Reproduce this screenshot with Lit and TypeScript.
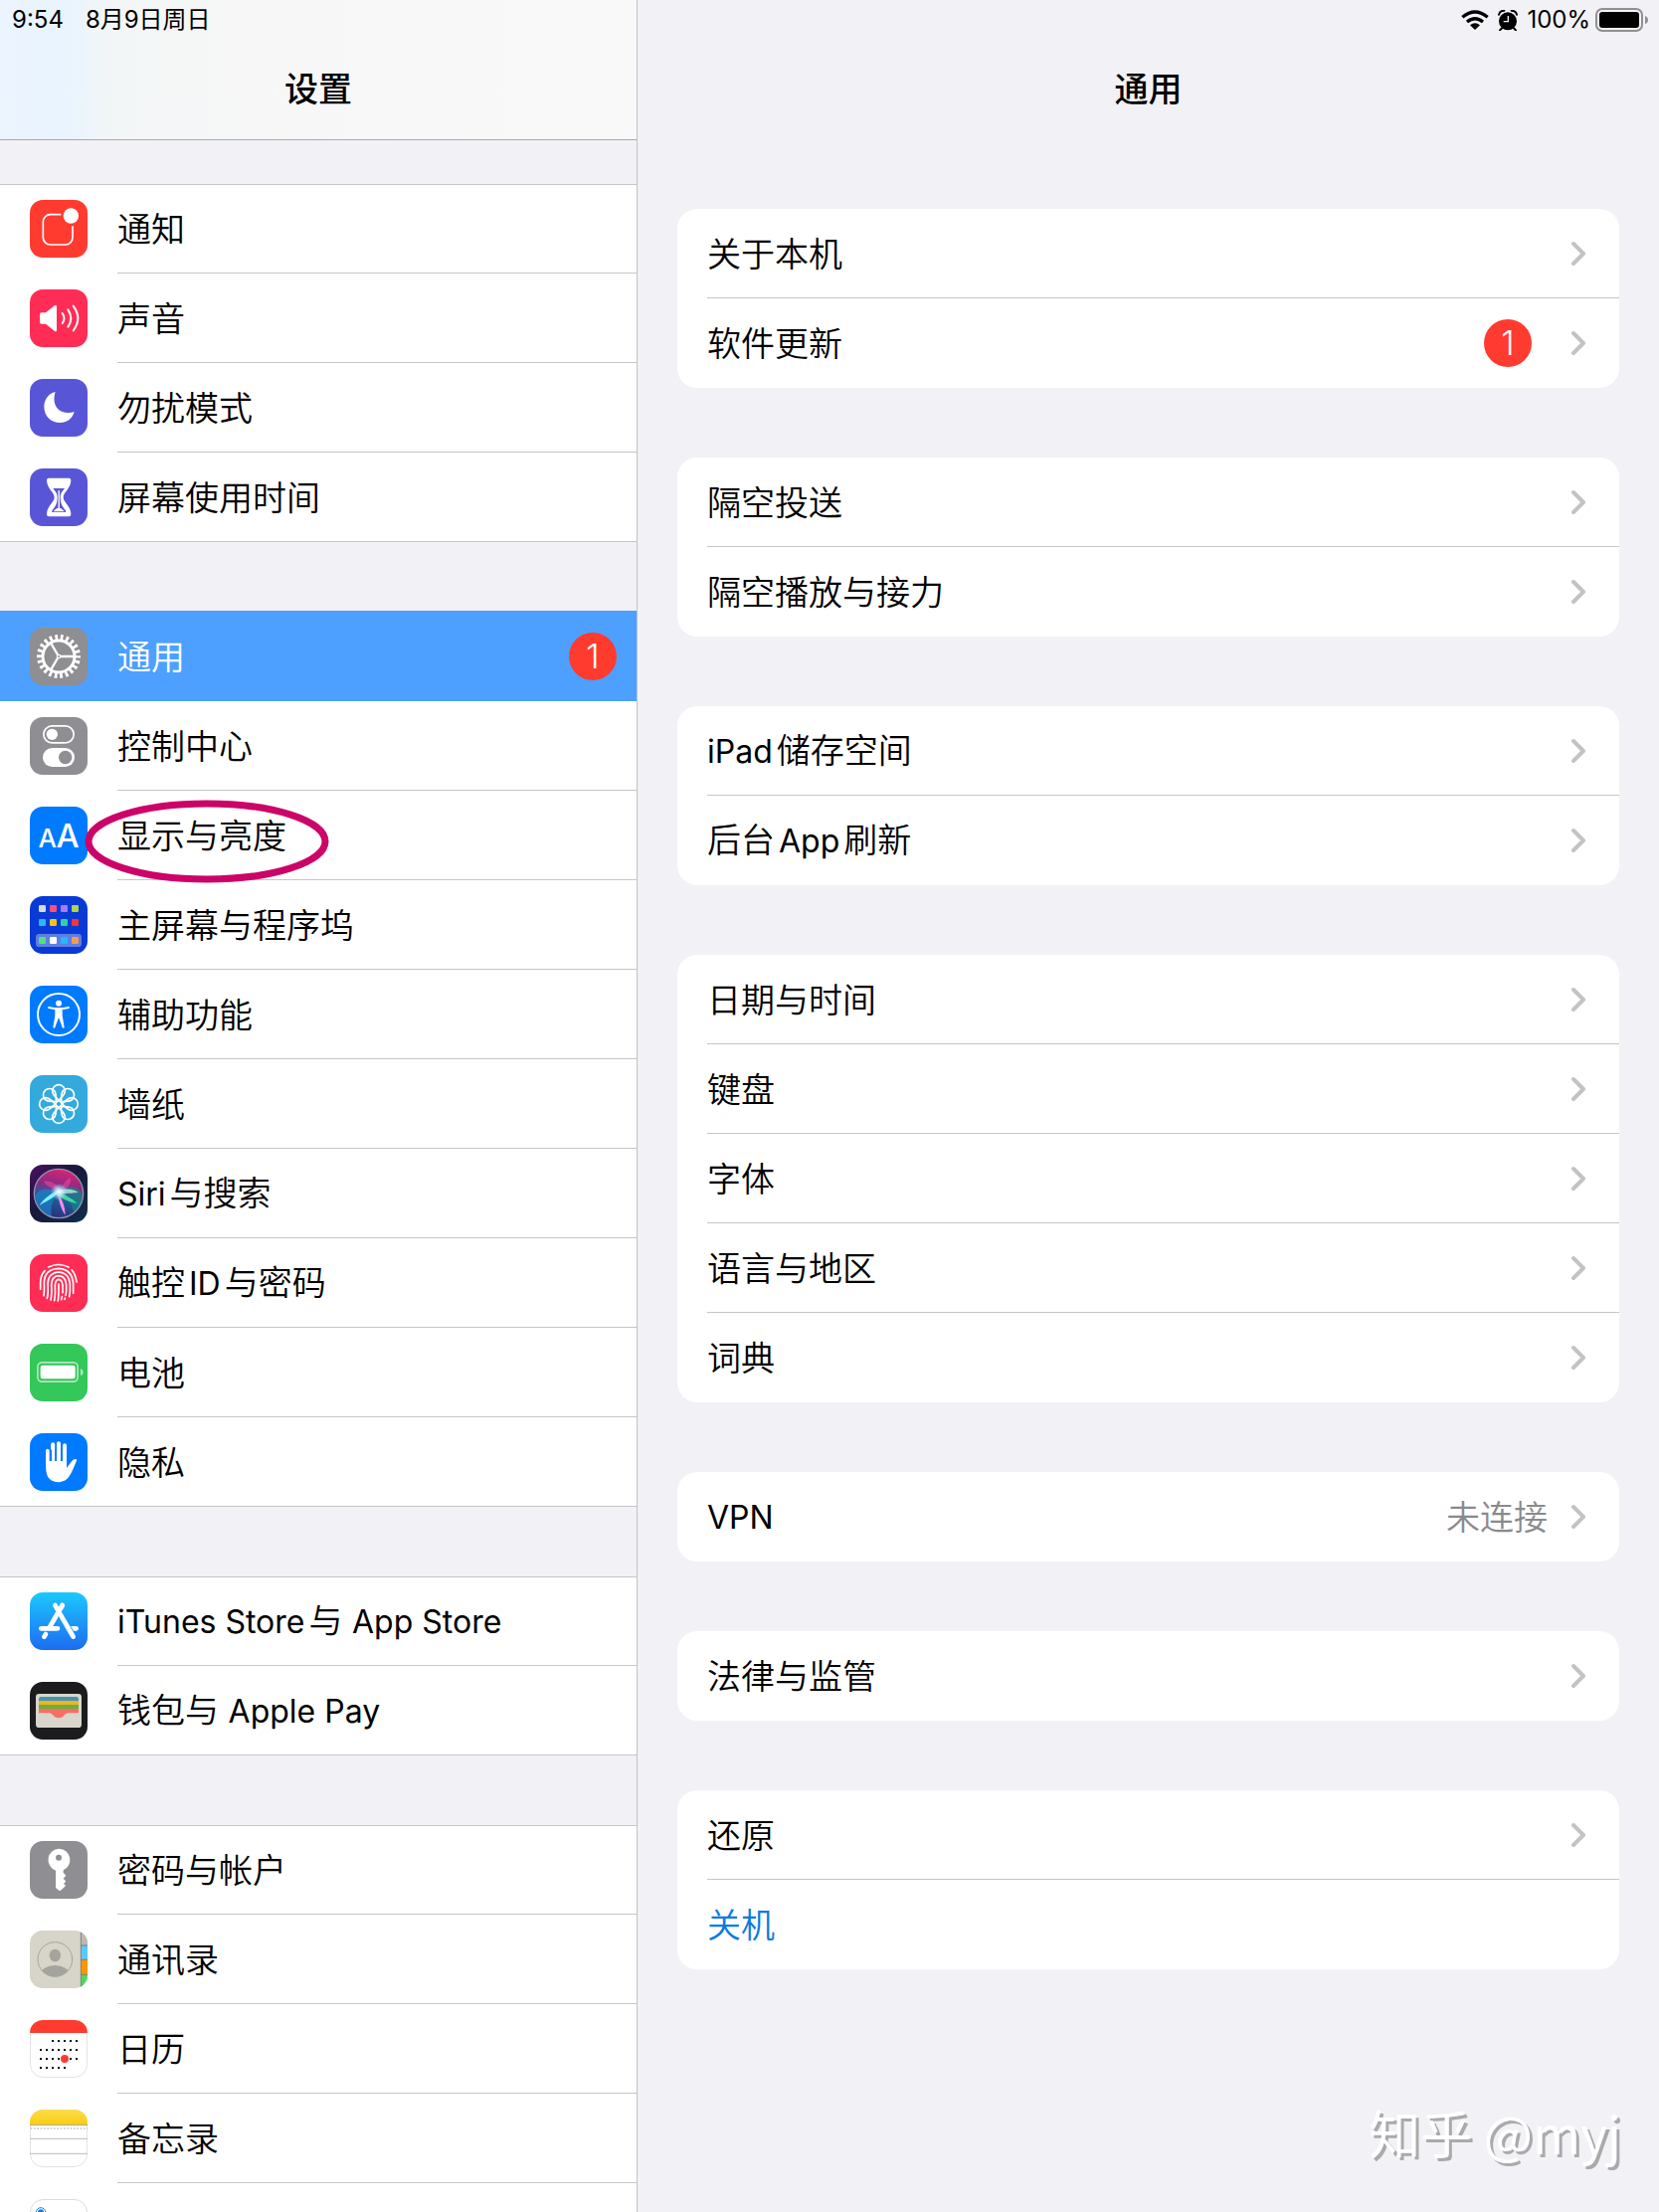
import { LitElement, html, css, svg, nothing } from "lit";
import type { SVGTemplateResult } from "lit";
import { customElement, property } from "lit/decorators.js";
import { classMap } from "lit/directives/class-map.js";

/* Every tile is drawn on a 174-unit square. */
const solid = (fill: string) => svg`<rect width="174" height="174" rx="39" fill=${fill} />`;

const petals = [0, 45, 90, 135, 180, 225, 270, 315];
const homeTiles = [
  ["#d5dbe0", "#fb5078", "#a57bf7", "#b1d34d"],
  ["#26b8f0", "#f8c01c", "#2fd0a8", "#f5352f"],
  ["#53e07a", "#ffffff", "#21baff", "#f59b50"],
];
const homeRows = [27, 69, 123];
const calendarRows = [
  [2, 6],
  [0, 6],
  [0, 6],
  [0, 4],
];

const icons: Record<string, SVGTemplateResult> = {
  notifications: svg`${solid("#ff3b30")}
    <path d="M94 44H62a22 22 0 0 0-22 22v47a22 22 0 0 0 22 22h45a22 22 0 0 0 22-22V79" fill="none" stroke="#fff" stroke-width="5" />
    <circle cx="124" cy="48" r="23" fill="#fff" />`,
  sounds: svg`${solid("#ff2d55")}
    <path d="M35 70H48L74 49Q81 44 81 53V122Q81 130 74 125L48 104H35Q30 104 30 99V75Q30 70 35 70Z" fill="#fff" />
    <path d="M98 72Q109 87 98 102M115 61Q133 87 115 113M131 50Q159 87 131 124" fill="none" stroke="#fff" stroke-width="6" stroke-linecap="round" />`,
  dnd: svg`${solid("#5856d6")}
    <path d="M77 39C50 45 43 70 43 84C43 112 64 132 91 132C112 132 128 120 134 99C118 105 97 103 85 91C72 78 71 56 77 39Z" fill="#fff" />`,
  screentime: svg`${solid("#5856d6")}
    <path d="M57 29H118Q124 29 124 36C124 60 101 72 101 87C101 102 124 114 124 138Q124 145 118 145H57Q51 145 51 138C51 114 74 102 74 87C74 72 51 60 51 36Q51 29 57 29Z" fill="#fff" />
    <path d="M70 60H105C101 67 92 72 92 87C92 106 99 117 108 127L108 132H67V127C76 117 83 106 83 87C83 72 74 67 70 60Z" fill="#5856d6" />
    <path d="M85.500 66H89.500V119C96 121 101 125 104 130H71C74 125 79 121 85.500 119Z" fill="#fff" />`,
  general: svg`${solid("#8e8e93")}
    <g fill="none" stroke="#fff">
      <circle cx="87" cy="87" r="58" stroke-width="16" pathLength="44" stroke-dasharray="1 1" stroke-dashoffset="0.5" />
      <circle cx="87" cy="87" r="48" stroke-width="9" />
      <path d="M87 87H134M87 87L63 46M87 87L63 128" stroke-width="7" />
    </g>
    <circle cx="87" cy="87" r="7" fill="#fff" /><circle cx="87" cy="87" r="3" fill="#8e8e93" />`,
  control: svg`${solid("#8e8e93")}
    <rect x="41.500" y="26.500" width="91" height="51" rx="25.500" fill="none" stroke="#fff" stroke-width="5" />
    <circle cx="67" cy="52" r="17" fill="#fff" />
    <rect x="39" y="93" width="96" height="57" rx="28.500" fill="#fff" />
    <circle cx="107" cy="121.500" r="20" fill="#8e8e93" />`,
  display: svg`${solid("#007aff")}
    <g fill="#fff" text-anchor="middle" font-family="Inter, sans-serif" font-weight="450">
      <text x="53" y="123" font-size="78">A</text><text x="114" y="123" font-size="98">A</text>
    </g>`,
  home: svg`${solid("#0a3ad6")}
    <rect x="18" y="114" width="138" height="39" rx="10" fill="#fff" fill-opacity="0.35" />
    ${homeTiles.map((row, r) =>
      row.map((c, i) => svg`<rect x=${27 + i * 33} y=${homeRows[r]} width="21" height="21" rx="4" fill=${c} />`)
    )}`,
  accessibility: svg`${solid("#007aff")}
    <circle cx="87" cy="87" r="63" fill="none" stroke="#fff" stroke-width="6" />
    <circle cx="87" cy="53" r="9" fill="#fff" />
    <path d="M57 66Q72 70 87 70T117 66" fill="none" stroke="#fff" stroke-width="6" stroke-linecap="round" />
    <path d="M76 68H98V90L104 126Q101 130 98 126L88 98H86L76 126Q73 130 70 126L76 90Z" fill="#fff" />`,
  wallpaper: svg`${solid("#34aadc")}
    <g fill="none" stroke="#fff" stroke-width="5">
      ${petals.map(
        (a) => svg`<path transform="rotate(${a} 87 87)" d="M87 77C80 67 68 60 68 48A19 19 0 0 1 106 48C106 60 94 67 87 77Z" />`
      )}
      <circle cx="87" cy="87" r="9" />
    </g>`,
  siri: svg`
    <defs>
      <linearGradient id="siri-bg" x1="0" y1="0" x2="1" y2="1">
        <stop offset="0" stop-color="#4a1062" /><stop offset="0.45" stop-color="#17183a" /><stop offset="1" stop-color="#122f4a" />
      </linearGradient>
      <linearGradient id="siri-orb" x1="0.6" y1="0" x2="0.4" y2="1">
        <stop offset="0" stop-color="#d8246e" /><stop offset="0.35" stop-color="#8a2a86" />
        <stop offset="0.6" stop-color="#1f5f96" /><stop offset="1" stop-color="#2b2f7c" />
      </linearGradient>
      <radialGradient id="siri-glow"><stop offset="0" stop-color="#fff" /><stop offset="0.4" stop-color="#c8f4ff" stop-opacity="0.8" /><stop offset="1" stop-color="#7fd6ff" stop-opacity="0" /></radialGradient>
    </defs>
    <rect width="174" height="174" rx="39" fill="url(#siri-bg)" />
    <circle cx="87" cy="87" r="73" fill="url(#siri-orb)" />
    <path d="M87 82C60 70 30 70 18 90C14 120 40 150 66 156C60 130 70 100 87 82Z" fill="#1a86cf" fill-opacity="0.65" />
    <path d="M90 82C115 60 140 62 157 84C160 110 150 130 132 142C125 112 112 96 90 82Z" fill="#0f8f86" fill-opacity="0.6" />
    <path d="M88 84C70 72 48 64 42 50C60 46 84 56 92 80C100 58 108 46 122 40C128 56 112 76 90 86Z" fill="#f04aa0" fill-opacity="0.55" />
    <path d="M90 78C110 70 134 74 146 84C124 86 106 88 90 86Z" fill="#b9f5ea" fill-opacity="0.75" />
    <path d="M28 123C46 100 66 84 92 76C80 96 56 108 28 123Z" fill="#7ff3ff" />
    <path d="M84 84C100 88 126 100 143 117C120 114 98 104 84 90Z" fill="#3fe0a4" fill-opacity="0.9" />
    <path d="M84 88C96 100 106 124 107 152C98 142 88 116 84 88Z" fill="#f08ce4" />
    <circle cx="88" cy="82" r="26" fill="url(#siri-glow)" />
    <circle cx="87" cy="87" r="74" fill="none" stroke="#b9b6cf" stroke-opacity="0.75" stroke-width="4" />`,
  touchid: svg`${solid("#ff2d55")}
    <g fill="none" stroke="#fff" stroke-width="5" stroke-linecap="round">
      <path d="M56 39Q86 24 117 39" />
      <path d="M32 106V86Q32 64 45 50M126 47Q138 60 141 84" />
      <path d="M42 125Q44 112 43 88Q43 45 87 43Q127 45 131 88V118" />
      <path d="M52 133Q56 118 54 90Q55 56 87 54Q118 56 121 90Q122 112 119 128" />
      <path d="M63 138Q67 120 65 92Q66 66 87 65Q108 66 110 92Q111 112 108 124" />
      <path d="M74 140Q78 120 76 94Q77 77 87 76Q98 77 99 94V116M97 128L95 137" />
      <path d="M87 90V110Q87 126 85 141M106 132L105 136" />
    </g>`,
  battery: svg`${solid("#34c759")}
    <rect x="23.500" y="56.500" width="121" height="58" rx="13" fill="none" stroke="#fff" stroke-opacity="0.6" stroke-width="5" />
    <rect x="32" y="65" width="105" height="41" rx="7" fill="#fff" />
    <path d="M153 75Q161 79 161 86T153 97Z" fill="#fff" fill-opacity="0.6" />`,
  privacy: svg`${solid("#007aff")}
    <g stroke="#fff" stroke-linecap="round">
      <path d="M53.500 53V96" stroke-width="11" /><path d="M69.500 34V96" stroke-width="12" />
      <path d="M87 31V96" stroke-width="12" /><path d="M105 37V96" stroke-width="12" />
    </g>
    <path d="M63 50h3v36h-3zM77 50h4v36h-4zM95 50h3v36h-3z" fill="#007aff" />
    <path d="M48 84H111V105L126 85Q134 76 141 79Q143 81 138 90C131 108 122 129 111 139C98 151 70 150 59 137C50 127 48 116 48 84Z" fill="#fff" />`,
  appstore: svg`
    <defs><linearGradient id="store" x1="0" y1="0" x2="0" y2="1"><stop offset="0" stop-color="#1bc8fc" /><stop offset="1" stop-color="#1d6cf1" /></linearGradient></defs>
    <rect width="174" height="174" rx="39" fill="url(#store)" />
    <g stroke="#fff" stroke-width="14" stroke-linecap="round">
      <path d="M34 109H84M122 109H140" /><path d="M98 39L58 108M48 126L43 134" />
    </g>
    <path d="M76 39L131 134" stroke="#219ef8" stroke-width="19" />
    <path d="M76 39L131 134M98 39L82 67" stroke="#fff" stroke-width="14" stroke-linecap="round" />`,
  wallet: svg`${solid("#1c1c1e")}
    <rect x="18" y="36" width="138" height="102" rx="10" fill="#d9d6cc" />
    <path d="M27 57V52Q27 45 34 45H140Q147 45 147 52V57Z" fill="#4196b4" />
    <path d="M27 57H147V69H27Z" fill="#f1b31c" /><path d="M27 69H147V81H27Z" fill="#67b13c" />
    <path d="M27 81H147V94H117C104 94 103 109 87 109S70 94 57 94H27Z" fill="#f86e64" />`,
  passwords: svg`${solid("#8e8e93")}
    <path d="M88 23A34 34 0 0 1 101 88V95L109 104L101 113L107 119Q110 123 101 129L107 133Q109 135 105 138L92 150Q89 151 86 148L78 141V89A34 34 0 0 1 88 23Z" fill="#fff" />
    <circle cx="87" cy="50" r="9" fill="#8e8e93" />`,
  contacts: svg`
    <defs><clipPath id="tile"><rect width="174" height="174" rx="39" /></clipPath><clipPath id="face"><circle cx="76" cy="87" r="52" /></clipPath></defs>
    <g clip-path="url(#tile)">
      <rect width="174" height="174" fill="#d7d4ca" />
      <rect x="154" width="20" height="44" fill="#bab8b0" /><rect x="154" y="44" width="20" height="44" fill="#5ac8fa" />
      <rect x="154" y="88" width="20" height="45" fill="#ff9500" /><rect x="154" y="133" width="20" height="41" fill="#4cd964" />
      <path d="M154 0V174M154 45H174M154 88H174M154 133H174" stroke="#75736b" stroke-width="2.500" />
    </g>
    <ellipse cx="76" cy="132" rx="44" ry="27" fill="#a5a39d" clip-path="url(#face)" />
    <ellipse cx="76" cy="75" rx="17" ry="19" fill="#a5a39d" />
    <circle cx="76" cy="87" r="52" fill="none" stroke="#a5a39d" stroke-width="3" />`,
  calendar: svg`
    <rect x="1.500" y="1.500" width="171" height="171" rx="38" fill="#fff" stroke="#e2e2e4" stroke-width="3" />
    <path d="M0 39A39 39 0 0 1 39 0H135A39 39 0 0 1 174 39Z" fill="#ff3b30" />
    ${calendarRows.map(([from, to], r) =>
      Array.from({ length: to - from + 1 }, (_, i) => svg`<rect x=${30 + (from + i) * 18} y=${60 + r * 27} width="6" height="6" />`)
    )}
    <circle cx="105" cy="117" r="12" fill="#ff3b30" />`,
  notes: svg`
    <defs><linearGradient id="pad" x1="0" y1="0" x2="0" y2="1"><stop offset="0" stop-color="#fbdd4e" /><stop offset="1" stop-color="#fbcd0c" /></linearGradient></defs>
    <rect x="1.500" y="1.500" width="171" height="171" rx="38" fill="#fff" stroke="#e2e2e4" stroke-width="3" />
    <path d="M0 46V39A39 39 0 0 1 39 0H135A39 39 0 0 1 174 39V46Z" fill="url(#pad)" />
    <path d="M0 47H174" stroke="#a9a48f" stroke-width="3" />
    <path d="M2 57H174" stroke="#c4c4c4" stroke-width="5" stroke-dasharray="5 5" />
    <path d="M0 88H174M0 133H174" stroke="#bcbcbe" stroke-width="3" />`,
  reminders: svg`
    <rect x="1.500" y="1.500" width="171" height="171" rx="38" fill="#fff" stroke="#dcdcde" stroke-width="3" />
    <circle cx="33" cy="40" r="9" fill="#1a7fe0" /><circle cx="33" cy="40" r="14" fill="none" stroke="#1a7fe0" stroke-width="3" />`,
};

interface SidebarItem {
  icon: string;
  label: string;
  badge?: string;
  selected?: boolean;
  circled?: boolean;
}

interface DetailItem {
  label: string;
  badge?: string;
  value?: string;
  action?: boolean;
}

const sidebarGroups: SidebarItem[][] = [
  [
    { icon: "notifications", label: "通知" },
    { icon: "sounds", label: "声音" },
    { icon: "dnd", label: "勿扰模式" },
    { icon: "screentime", label: "屏幕使用时间" },
  ],
  [
    { icon: "general", label: "通用", badge: "1", selected: true },
    { icon: "control", label: "控制中心" },
    { icon: "display", label: "显示与亮度", circled: true },
    { icon: "home", label: "主屏幕与程序坞" },
    { icon: "accessibility", label: "辅助功能" },
    { icon: "wallpaper", label: "墙纸" },
    { icon: "siri", label: "Siri与搜索" },
    { icon: "touchid", label: "触控ID与密码" },
    { icon: "battery", label: "电池" },
    { icon: "privacy", label: "隐私" },
  ],
  [
    { icon: "appstore", label: "iTunes Store与 App Store" },
    { icon: "wallet", label: "钱包与 Apple Pay" },
  ],
  [
    { icon: "passwords", label: "密码与帐户" },
    { icon: "contacts", label: "通讯录" },
    { icon: "calendar", label: "日历" },
    { icon: "notes", label: "备忘录" },
    { icon: "reminders", label: "" },
  ],
];

const detailGroups: DetailItem[][] = [
  [{ label: "关于本机" }, { label: "软件更新", badge: "1" }],
  [{ label: "隔空投送" }, { label: "隔空播放与接力" }],
  [{ label: "iPad储存空间" }, { label: "后台App刷新" }],
  [{ label: "日期与时间" }, { label: "键盘" }, { label: "字体" }, { label: "语言与地区" }, { label: "词典" }],
  [{ label: "VPN", value: "未连接" }],
  [{ label: "法律与监管" }],
  [{ label: "还原" }, { label: "关机", action: true }],
];

/* Latin runs get their own size, and a small gap where they touch a Chinese character. */
const mixed = (text: string) =>
  text.split(/([A-Za-z][A-Za-z ]*)/).map((part, i, all) =>
    i % 2 === 0
      ? part
      : html`<span
          class=${classMap({
            latin: true,
            before: all[i - 1] !== "" && !all[i - 1].endsWith(" "),
            after: all[i + 1] !== "",
          })}
          >${part}</span
        >`
  );

const rowStyles = css`
  .badge {
    display: grid;
    place-items: center;
    width: 48px;
    height: 48px;
    border-radius: 50%;
    background: #ff3b30;
    color: #fff;
    line-height: 48px;
  }
  .label,
  .value {
    padding-top: 2px;
  }
  .latin {
    font-size: 32px;
    font-weight: 400;
  }
  .before {
    margin-left: 4px;
  }
  .after {
    margin-right: 4px;
  }
`;

@customElement("sidebar-row")
class SidebarRow extends LitElement {
  @property({ attribute: false }) item!: SidebarItem;
  @property({ type: Boolean }) last = false;

  static styles = [
    rowStyles,
    css`
      :host {
        display: block;
      }
      .row {
        position: relative;
        display: flex;
        gap: 30px;
        padding-left: 30px;
        height: 90px;
        color: inherit;
        text-decoration: none;
      }
      .icon {
        flex: none;
        align-self: center;
        width: 58px;
        height: 58px;
      }
      .body {
        flex: 1;
        display: flex;
        align-items: center;
        justify-content: space-between;
        box-sizing: border-box;
        min-width: 0;
        padding-right: 20px;
        border-bottom: 1px solid #c6c6c8;
        white-space: nowrap;
      }
      .last .body {
        border-bottom-color: transparent;
      }
      .selected {
        background: #4da0ff;
        box-shadow: 0 -1px #4da0ff;
        color: #fff;
      }
      .selected .body {
        border-bottom-color: transparent;
      }
      .mark {
        position: absolute;
        left: 85px;
        top: 9px;
        width: 246px;
        height: 84px;
        z-index: 1;
        pointer-events: none;
      }
    `,
  ];

  render() {
    const { icon, label, badge, selected, circled } = this.item;
    return html`<a
      class=${classMap({ row: true, selected: !!selected, last: this.last })}
      href="#${icon}"
      aria-label=${label || icon}
      aria-current=${selected ? "page" : nothing}
    >
      <svg class="icon" viewBox="0 0 174 174" aria-hidden="true">${icons[icon]}</svg>
      <span class="body">
        <span class="label">${mixed(label)}</span>
        ${badge ? html`<span class="badge">${badge}</span>` : nothing}
      </span>
      ${circled
        ? html`<svg class="mark" viewBox="0 0 246 84" aria-hidden="true">
            <ellipse cx="123" cy="42" rx="119" ry="38" fill="none" stroke="#cc0468" stroke-width="7" />
          </svg>`
        : nothing}
    </a>`;
  }
}

@customElement("detail-row")
class DetailRow extends LitElement {
  @property({ attribute: false }) item!: DetailItem;
  @property({ type: Boolean }) last = false;

  static styles = [
    rowStyles,
    css`
      :host {
        display: block;
      }
      .row {
        display: block;
        box-sizing: border-box;
        width: 100%;
        padding: 0 0 0 30px;
        border: 0;
        background: none;
        color: inherit;
        font: inherit;
        text-align: left;
        text-decoration: none;
      }
      .body {
        display: flex;
        align-items: center;
        box-sizing: border-box;
        height: 90px;
        padding-right: 34px;
        border-bottom: 1px solid #c6c6c8;
      }
      .last .body {
        border-bottom-color: transparent;
      }
      .label {
        flex: 1;
      }
      .action {
        color: #0a7ae0;
      }
      .badge {
        margin-right: 40px;
      }
      .value {
        margin-right: 24px;
        color: #8a8a8e;
      }
      .chevron {
        width: 14px;
        height: 26px;
      }
    `,
  ];

  render() {
    const { label, badge, value, action } = this.item;
    if (action) {
      return html`<button type="button" class=${classMap({ row: true, action: true, last: this.last })}>
        <span class="body"><span class="label">${label}</span></span>
      </button>`;
    }
    return html`<a class=${classMap({ row: true, last: this.last })} href="#">
      <span class="body">
        <span class="label">${mixed(label)}</span>
        ${badge ? html`<span class="badge">${badge}</span>` : nothing}
        ${value ? html`<span class="value">${value}</span>` : nothing}
        <svg class="chevron" viewBox="0 0 14 26" aria-hidden="true">
          <path d="M2 3L12 13L2 23" fill="none" stroke="#c3c3c5" stroke-width="4" stroke-linecap="round" stroke-linejoin="round" />
        </svg>
      </span>
    </a>`;
  }
}

@customElement("app-root")
class AppRoot extends LitElement {
  static styles = css`
    :host {
      display: block;
      font: 350 34px/48px Inter, "Noto Sans CJK SC", sans-serif;
      color: #000;
    }
    .app {
      position: relative;
      display: grid;
      grid-template-columns: clamp(320px, 39vw, 641px) minmax(0, 1fr);
      height: 100vh;
      overflow: hidden;
      background: #f2f1f6;
    }
    .pane {
      display: flex;
      flex-direction: column;
      box-sizing: border-box;
      min-width: 0;
      min-height: 0;
    }
    .sidebar {
      border-right: 1px solid #c2c1c7;
    }
    .header {
      flex: none;
      box-sizing: border-box;
      height: 141px;
      border-bottom: 1px solid transparent;
    }
    .sidebar .header {
      border-bottom-color: #a9a9ae;
      background: linear-gradient(90deg, #ecf4fe 0, #e9f4fe 10%, #f3f6f7 18%, #f7f7f7 40%, #f9f9f9 100%);
    }
    .status {
      display: flex;
      align-items: center;
      height: 40px;
      padding: 0 10px 0 12px;
      font-size: 24px;
      line-height: 40px;
      font-weight: 400;
    }
    .date {
      margin-left: 22px;
    }
    .status-right {
      justify-content: flex-end;
    }
    .wifi {
      width: 28px;
      height: 20px;
      margin-right: 9px;
    }
    .alarm {
      width: 20px;
      height: 21px;
      margin-right: 9px;
    }
    .cell {
      width: 54px;
      height: 24px;
      margin-left: 5px;
    }
    .title {
      margin: 0;
      padding-top: 26px;
      font-size: 34px;
      line-height: 48px;
      font-weight: 500;
      text-align: center;
    }
    .scroll {
      flex: 1;
      display: flex;
      flex-direction: column;
      gap: 70px;
      min-height: 0;
      overflow-y: auto;
      scrollbar-width: none;
    }
    .scroll > * {
      flex: none;
    }
    .nav {
      padding-top: 44px;
    }
    .details {
      padding: 69px 40px 40px;
    }
    .group {
      margin: 0;
      padding: 0;
      list-style: none;
      background: #fff;
      box-shadow: inset 0 1px #c6c6c8, inset 0 -1px #c6c6c8;
    }
    .card {
      margin: 0;
      padding: 0;
      list-style: none;
      background: #fff;
      border-radius: 20px;
    }
    .watermark {
      position: absolute;
      right: 38px;
      bottom: 44px;
      color: #fff;
      font: 400 52px/72px "Noto Sans CJK SC", sans-serif;
      text-shadow: 3px 3px 0 #aaaaad;
    }
  `;

  render() {
    return html`<div class="app">
      <section class="pane sidebar">
        <header class="header">
          <div class="status"><span>9:54</span><span class="date">8月9日周日</span></div>
          <h1 class="title">设置</h1>
        </header>
        <nav class="scroll nav">
          ${sidebarGroups.map(
            (group) => html`<ul class="group">
              ${group.map(
                (item, i) => html`<li><sidebar-row .item=${item} ?last=${i === group.length - 1}></sidebar-row></li>`
              )}
            </ul>`
          )}
        </nav>
      </section>
      <main class="pane">
        <header class="header">
          <div class="status status-right">
            <svg class="wifi" viewBox="0 0 84 60" aria-hidden="true">
              <path d="M4 22Q42 -10 80 22M18 36Q42 16 66 36" fill="none" stroke="#000" stroke-width="10" />
              <path d="M42 60L27 46Q42 34 57 46Z" />
            </svg>
            <svg class="alarm" viewBox="0 0 60 63" aria-hidden="true">
              <circle cx="30" cy="34" r="27" />
              <path d="M3 14Q6 2 19 2M57 14Q54 2 41 2M13 54L6 61M47 54L54 61" fill="none" stroke="#000" stroke-width="6" stroke-linecap="round" />
              <path d="M31 18V35H17" fill="none" stroke="#f2f1f6" stroke-width="4" />
            </svg>
            <span>100%</span>
            <svg class="cell" viewBox="0 0 54 24" aria-hidden="true">
              <rect x="1" y="1" width="46" height="22" rx="6" fill="none" stroke="#8f8f94" stroke-width="2" />
              <rect x="4" y="4" width="40" height="16" rx="3" />
              <path d="M50 8Q53 9 53 12T50 16Z" fill="#8f8f94" />
            </svg>
          </div>
          <h2 class="title">通用</h2>
        </header>
        <div class="scroll details">
          ${detailGroups.map(
            (group) => html`<ul class="card">
              ${group.map(
                (item, i) => html`<li><detail-row .item=${item} ?last=${i === group.length - 1}></detail-row></li>`
              )}
            </ul>`
          )}
        </div>
      </main>
      <div class="watermark">知乎 @myj</div>
    </div>`;
  }
}
